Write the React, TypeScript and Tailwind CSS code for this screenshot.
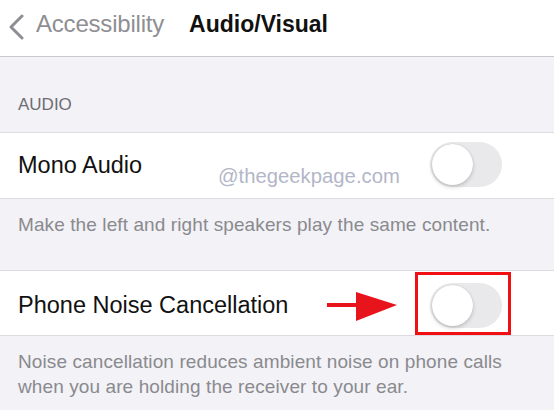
import React from 'react';

const Toggle: React.FC = () => (
  <div className="relative w-[72px] h-[45px] rounded-full bg-[#e9e9eb]">
    <div className="absolute left-[2px] top-[2px] w-[41px] h-[41px] rounded-full bg-white shadow-[0_2px_4px_rgba(0,0,0,0.18),0_0_1px_rgba(0,0,0,0.2)]" />
  </div>
);

const App: React.FC = () => {
  return (
    <div
      className="w-[554px] h-[410px] overflow-hidden bg-[#f2f2f7] flex flex-col"
      style={{ fontFamily: '"Liberation Sans", Arial, sans-serif' }}
    >
      {/* Nav bar */}
      <div className="h-[57px] shrink-0 bg-white border-b border-[#c9c9ce] flex items-center pl-[8px]">
        <svg width="18" height="26" viewBox="0 0 18 26" className="mt-[-2px]">
          <path d="M14 2 L3 13 L14 24" fill="none" stroke="#8e8e93" strokeWidth="3" strokeLinecap="round" strokeLinejoin="round" />
        </svg>
        <span className="ml-[10px] text-[24px] text-[#8e8e93] mt-[-8px] tracking-[-0.2px]">Accessibility</span>
        <span className="ml-[25px] text-[23px] font-bold text-[#111] mt-[-8px]">Audio/Visual</span>
      </div>

      {/* Section header */}
      <div className="h-[75px] shrink-0 flex items-end pl-[18px] pb-[17px] text-[17px] text-[#6d6d72] leading-[20px]">
        AUDIO
      </div>

      {/* Mono Audio row */}
      <div className="relative h-[67px] shrink-0 bg-white border-y border-[#dcdce0] flex items-center justify-between pl-[18px] pr-[52px]">
        <span className="text-[23.5px] text-[#111]">Mono Audio</span>
        <span className="absolute left-[218px] top-[31px] text-[20.3px] leading-[24px] text-[#b3b6c8]">@thegeekpage.com</span>
        <div className="mt-[-2px]">
          <Toggle />
        </div>
      </div>

      <div className="h-[71px] shrink-0 pl-[18px] pt-[13px] text-[19px] leading-[25px] text-[#8a8a8e] tracking-[0.1px]">
        Make the left and right speakers play the same content.
      </div>

      {/* Phone Noise Cancellation row */}
      <div className="relative h-[66px] shrink-0 bg-white border-y border-[#dcdce0] flex items-center justify-between pl-[18px] pr-[52px]">
        <span className="text-[23.5px] text-[#111] mt-[6px]">Phone Noise Cancellation</span>
        <svg width="72" height="30" viewBox="0 0 72 30" className="absolute left-[326px] top-[21px]">
          <path d="M1 11 L34 11 L34 15 L1 15 Z" fill="#e8141c" />
          <path d="M30 0 L71 13 L30 29 Z" fill="#e8141c" />
        </svg>
        <div className="mt-[4px]">
          <Toggle />
        </div>
        <div className="absolute left-[415px] top-[1px] w-[96px] h-[63px] border-[3px] border-[#f20f14]" />
      </div>

      <div className="pl-[18px] pt-[13px] pr-[30px] text-[19px] leading-[25px] text-[#8a8a8e] tracking-[0.1px]">
        Noise cancellation reduces ambient noise on phone calls when you are holding the receiver to your ear.
      </div>
    </div>
  );
};

export default App;
